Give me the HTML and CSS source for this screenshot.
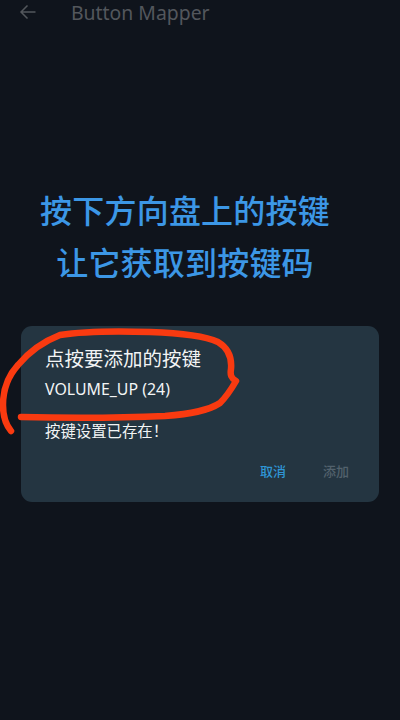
FILE: index.html
```html
<!DOCTYPE html>
<html lang="zh-CN">
<head>
<meta charset="utf-8">
<title>Button Mapper</title>
<link rel="stylesheet" href="styles.css">
</head>
<body>
<div class="screen">
  <header class="appbar">
    <svg class="back" width="18" height="16" viewBox="0 0 18 16"><path d="M16.500 8H2M8.500 1.500L2 8l6.500 6.500" fill="none" stroke="#53575c" stroke-width="1.500"/></svg>
    <span class="title">Button Mapper</span>
  </header>
  <h1 class="prompt">按下方向盘上的按键<br>让它获取到按键码</h1>
  <section class="card">
    <h2 class="card-title">点按要添加的按键</h2>
    <p class="keycode">VOLUME_UP (24)</p>
    <p class="message">按键设置已存在！</p>
    <div class="actions">
      <span class="btn cancel">取消</span>
      <span class="btn add">添加</span>
    </div>
  </section>
  <svg class="scribble" width="400" height="720" viewBox="0 0 400 720"><path d="M11 431C6 425 3 417 3 405C3 390 8 376 18 365C28 353 42 342 60 335C85 331 120 331 150 332C180 333 205 336 218 342C228 348 232 358 231 369C230 375 231 378 236 381C232 388 227 396 220 403C208 411 190 414 165 416C120 418 60 418 21 417" fill="none" stroke="#f93a10" stroke-width="6.500" stroke-linecap="round" stroke-linejoin="round"/></svg>
</div>
</body>
</html>
```
FILE: styles.css
```css
* { box-sizing: border-box; }
html, body { margin: 0; padding: 0; }
body { background: #0f141c; font-family: "Noto Sans CJK SC", "Noto Sans", sans-serif; }
.screen { position: relative; width: 400px; height: 720px; overflow: hidden; background: #0f141c; }
.appbar { display: flex; align-items: center; height: 26px; padding-left: 19px; }
.back { flex: none; margin-bottom: 2px; }
.title { margin-left: 34px; font-family: "Noto Sans", sans-serif; font-size: 19.400px; line-height: 26px; color: #53575c; }
.prompt { margin: 157px 30px 0 0; font-size: 32px; letter-spacing: 0.200px; line-height: 52px; font-weight: 500; text-align: center; color: #3c97e6; }
.card { margin: 39px 21px 0; height: 176px; padding: 14px 24px 0; background: #243541; border-radius: 11px; color: #f2f4f5; display: flex; flex-direction: column; }
.card-title { margin: 0; font-size: 19.500px; line-height: 36px; font-weight: 400; white-space: nowrap; }
.keycode { margin: 3px 0 0; font-family: "Noto Sans", sans-serif; font-size: 15.900px; line-height: 20px; }
.message { margin: 21px 0 0; font-size: 15.400px; line-height: 20px; }
.actions { display: flex; justify-content: flex-end; gap: 37px; margin-top: 21px; padding-right: 6px; font-size: 13px; line-height: 20px; font-weight: 500; }
.cancel { color: #2f95d6; }
.add { color: #52616c; }
.scribble { position: absolute; left: 0; top: 0; pointer-events: none; }
```
